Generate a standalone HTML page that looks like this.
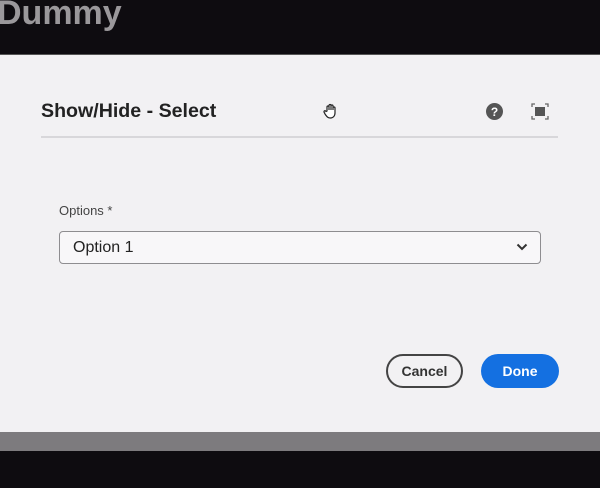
<!DOCTYPE html>
<html><head><style>
body{margin:0;width:600px;height:488px;background:#0e0c10;position:relative;overflow:hidden;font-family:"Liberation Sans",sans-serif}
.dummy{position:absolute;left:-3px;top:-6px;font-size:34px;font-weight:bold;color:#9a989b}
.panel{position:absolute;left:0;top:54px;width:600px;height:378px;background:#f2f1f3;border-top:1px solid #555}
.gray{position:absolute;left:0;top:432px;width:600px;height:19px;background:#7d7b7e}
.title{position:absolute;left:41px;top:100px;font-size:19.6px;font-weight:bold;color:#222}
.div{position:absolute;left:41px;top:136px;width:517px;height:2px;background:#d8d7da}
.label{position:absolute;left:59px;top:203px;font-size:13px;color:#444}
.sel{position:absolute;left:59px;top:231px;width:480px;height:31px;border:1px solid #8e8d90;border-radius:4px;background:#f8f7f9}
.sel span{position:absolute;left:13px;top:7px;font-size:16px;color:#222}
.btn{position:absolute;top:354px;height:34px;border-radius:17px;font-size:14px;font-weight:bold;text-align:center;line-height:34px;box-sizing:border-box}
.cancel{left:386px;width:77px;border:2px solid #444;color:#333;line-height:30px}
.done{left:481px;width:78px;background:#1470e1;color:#fff}
</style></head><body>
<div class="dummy">Dummy</div>
<div class="panel"></div>
<div class="gray"></div>
<div class="title">Show/Hide - Select</div>
<svg style="position:absolute;left:322px;top:102px" width="18" height="18" viewBox="0 0 18 18"><path d="M5 9V5a1 1 0 0 1 2 0v3V3.5a1 1 0 0 1 2 0V8V4a1 1 0 0 1 2 0v4V6a1 1 0 0 1 2 0v5c0 3-2 5-4.5 5S5 15 3 12l-1-2a1 1 0 0 1 2-.5z" fill="#fff" stroke="#222" stroke-width="1.2"/></svg>
<svg style="position:absolute;left:486px;top:103px" width="17" height="17" viewBox="0 0 17 17"><circle cx="8.5" cy="8.5" r="8.5" fill="#555"/><text x="8.5" y="13" font-size="12" font-weight="bold" fill="#fff" text-anchor="middle" font-family="Liberation Sans">?</text></svg>
<svg style="position:absolute;left:531px;top:103px" width="18" height="17" viewBox="0 0 18 17"><path d="M1 4V1h3M14 1h3v3M17 13v3h-3M4 16H1v-3" fill="none" stroke="#666" stroke-width="1.3"/><rect x="4" y="4" width="10" height="9" fill="#555"/></svg>
<div class="div"></div>
<div class="label">Options *</div>
<div class="sel"><span>Option 1</span><svg style="position:absolute;right:12px;top:11px" width="12" height="8" viewBox="0 0 12 8"><path d="M1.5 1.5L6 6l4.5-4.5" fill="none" stroke="#333" stroke-width="2"/></svg></div>
<div class="btn cancel">Cancel</div>
<div class="btn done">Done</div>
</body></html>
